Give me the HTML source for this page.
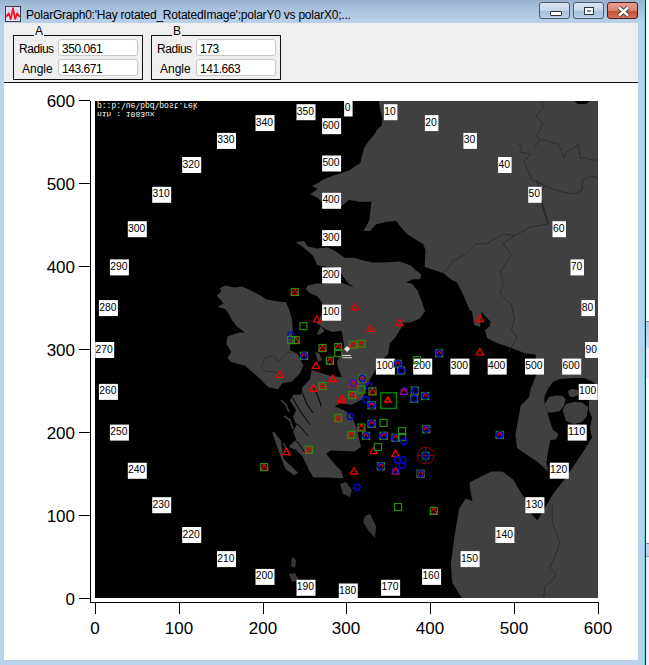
<!DOCTYPE html>
<html><head><meta charset="utf-8">
<style>
html,body{margin:0;padding:0;}
body{width:649px;height:665px;overflow:hidden;position:relative;background:#fff;font-family:"Liberation Sans",sans-serif;}
.a{position:absolute;}
#outside{left:645px;top:0;width:4px;height:665px;background:linear-gradient(#fff 0,#fff 321px,#8a8a8a 321px,#8a8a8a 322px,#c3ceda 322px,#d6dee8 348px,#eeeeee 348px,#eeeeee 378px,#fff 378px,#fff 543px,#8a8a8a 543px,#8a8a8a 544px,#c8d4e0 544px,#c8d4e0 556px,#a0a0a0 556px,#a0a0a0 557px,#eeeeee 557px);}
#frame{left:0;top:0;width:645px;height:665px;background:#b9d1ea;}
#title{left:0;top:0;width:645px;height:23px;background:linear-gradient(#98b2cf,#a6bfdb 8px,#b9d1ea 23px);}
#edge1{left:644px;top:0;width:1px;height:665px;background:#5ad8f8;}
#edge2{left:645px;top:0;width:1px;height:665px;background:#111;}
#content{left:4px;top:23px;width:634px;height:637px;background:#fff;}
#panel{left:4px;top:23px;width:634px;height:59px;background:#efefef;}
#pline{left:4px;top:82px;width:634px;height:1px;background:#111;}
.ttl{left:26px;top:7.5px;font-size:12px;letter-spacing:-0.22px;color:#000;white-space:nowrap;}
.gb{border:1px solid #111;width:128px;height:43px;}
.gl{font-size:12px;background:#efefef;padding:0 1px;color:#000;}
.lab{font-size:12px;letter-spacing:-0.45px;color:#000;}
.tb{background:#fff;border:1px solid #c8c8c8;border-radius:3px;height:15px;width:75px;font-size:12px;letter-spacing:-0.45px;line-height:19px;padding-left:3px;box-sizing:content-box;}
.btn{top:2px;height:17px;border:1px solid #4c5a6e;border-radius:3px;background:linear-gradient(#d9e6f4,#c3d5ea 50%,#a7bfdb 51%,#b9cfe8);box-sizing:border-box;}
.ax{font-size:17px;color:#000;white-space:nowrap;}
.pl{font-size:11px;background:#fff;color:#000;height:16px;line-height:16px;padding:0 2px;white-space:nowrap;transform:translate(-50%,-50%);}
</style></head><body>
<div class="a" id="outside"></div>
<div class="a" id="frame"></div>
<div class="a" id="title"></div>
<div class="a" id="edge1"></div>
<div class="a" id="edge2"></div>
<!-- icon -->
<svg class="a" style="left:5px;top:6px" width="16" height="16" viewBox="0 0 16 16">
<rect x="0.5" y="0.5" width="15" height="15" fill="#dfe2fa" stroke="#3a3f4a"/>
<path d="M1 4.5H15 M1 8.5H15 M1 12.5H15 M4.5 1V15 M8.5 1V15 M12.5 1V15" stroke="#c4c8f4" stroke-width="1" stroke-dasharray="1,1"/>
<path d="M1.2,11 L3.6,7.2 L5.8,13 L8,2.2 L10.2,13 L12.2,7.2 L14.7,11" fill="none" stroke="#f41020" stroke-width="1.7" stroke-linejoin="round"/>
</svg>
<div class="a ttl">PolarGraph0:'Hay rotated_RotatedImage';polarY0 vs polarX0;...</div>
<!-- buttons -->
<div class="a btn" style="left:539px;width:31px;"><div class="a" style="left:10px;top:8px;width:10px;height:3px;background:#fff;border:1px solid #333;border-radius:1px"></div></div>
<div class="a btn" style="left:573px;width:31px;"><div class="a" style="left:10px;top:4px;width:8px;height:6px;border:1px solid #333;background:#fff"><div class="a" style="left:2px;top:2px;width:4px;height:2px;border:0;background:#6b86a8"></div></div></div>
<div class="a btn" style="left:607px;width:31px;border-color:#4a1a1a;background:linear-gradient(#e8a090,#d98270 50%,#c14a30 51%,#d57058)"><svg class="a" style="left:9px;top:3px" width="13" height="11" viewBox="0 0 13 11"><path d="M2 1.5 L11 9.5 M11 1.5 L2 9.5" stroke="#333" stroke-width="4"/><path d="M2 1.5 L11 9.5 M11 1.5 L2 9.5" stroke="#fff" stroke-width="2.4"/></svg></div>

<div class="a" id="content"></div>
<div class="a" id="panel"></div>
<div class="a" id="pline"></div>

<!-- group A -->
<div class="a gb" style="left:13px;top:35px;"></div>
<div class="a gl" style="left:34px;top:24px;">A</div>
<div class="a lab" style="left:19px;top:42px;">Radius</div>
<div class="a lab" style="left:22px;top:62px;letter-spacing:0">Angle</div>
<div class="a tb" style="left:58px;top:39px;">350.061</div>
<div class="a tb" style="left:58px;top:59px;">143.671</div>
<!-- group B -->
<div class="a gb" style="left:151px;top:35px;"></div>
<div class="a gl" style="left:172px;top:24px;">B</div>
<div class="a lab" style="left:157px;top:42px;">Radius</div>
<div class="a lab" style="left:160px;top:62px;letter-spacing:0">Angle</div>
<div class="a tb" style="left:196px;top:39px;">173</div>
<div class="a tb" style="left:196px;top:59px;">141.663</div>

<!-- axes -->
<div class="a" style="left:90px;top:101px;width:1px;height:502px;background:#000"></div>
<div class="a" style="left:90px;top:602px;width:509px;height:1px;background:#000"></div>

<svg class="a" id="plot" style="left:95px;top:101px" width="503" height="497" viewBox="95 101 503 497">
<rect x="95" y="101" width="503" height="497" fill="#000"/>
<polygon points="378.8,101 380.6,111 382.5,118.5 381.5,125.9 376.9,129.6 375.1,133.3 367.7,142.5 364,148 362.1,155.5 360.3,162.9 354.7,166.6 349.2,170.3 341.8,173 332.5,175.8 323.3,179.5 317.7,183.2 312.2,186 317.7,188.8 310.3,194.3 317.7,198 323.3,203.5 340,207.2 349.2,199.8 358.4,201.7 371.4,201.7 369.5,220 363.6,230.7 370,231 376,224.5 386,221.8 396,221 401.6,228 407.7,234.6 415.4,239.2 423.1,243.9 425.5,250 424.7,267 433.9,270 443.2,273.1 450.9,279.3 457,282.4 460,288.6 464.3,297.3 469.7,310.2 472.2,311.3 473.1,317.7 474,325.1 480,327 481,316 482,312 486,317 490.5,321.5 490,326 485,330 487,338 498,343.6 505.3,345.8 513.9,349 524.7,353.3 535.5,354.4 537,365 536,376 530.7,388.8 529,397.3 520.5,405.8 518.8,416 515.4,434.6 517.1,448 527.3,455 537.5,461.7 548.3,471.4 546.5,462 548,452 550.2,440 556,439.5 558.5,434 553,430 550.2,422 547.4,412.4 544.5,404 544.5,396 548,389 553,382 560,379 568,378.5 576,378 584,378 591,381 598,385 598,101 590,101 586,104 578,104 574,101" fill="#404040"/>
<polygon points="461.7,598 452.2,582.4 450.8,563.5 454.9,533.7 459,509.3 465.7,498.5 472.5,501.2 469.8,487.7 469.8,482.3 480.6,476.8 491.4,471.4 502.3,471.4 513.1,479.6 521.2,493.1 526.6,501.2 532,514.7 537.5,520.2 545.6,506.6 553.7,493.1 564.5,479.6 575.4,463.3 586.2,447.1 594.3,433.5 596,420 595,400 598,395 598,598" fill="#404040"/>
<polygon points="225.4,285.6 234.2,287.6 242,286.6 248.9,289.5 256.7,293.5 260.6,295.4 266.4,299.3 276.2,301.3 286,302.2 288.9,309.1 291.9,318.9 292.8,330.6 290.9,340.4 289.9,350.1 297.7,354 301.6,361.9 303.6,365.8 299.7,373.6 291.9,381.4 282.1,383.3 278.2,389.2 268.4,387.3 258.6,377.5 251.8,371.6 245,365.8 231.3,361.9 227.4,357.9 231.3,352.1 226.4,344.3 227.4,336.4 239.1,332.5 244.9,332.5 237.1,326.7 231.3,318.9 229.3,315 225.4,309.1 217.6,307.1 223.5,303.2 216.6,295.4 221.5,291.5 219.5,288.6" fill="#404040"/>
<polygon points="295.7,242 304,241.1 307.7,246.6 317,248.5 328.1,247.6 335.5,251.3 344.7,257.7 354,257.7 363.2,260.5 372.5,262.4 383.5,262.4 400,261.4 410.8,265.4 415.4,270 421.6,274.7 420,279.3 412.4,279.3 406.2,282.4 412.1,283.7 417.7,291.1 421.4,300.3 425,311.4 419.5,318.8 410.3,322.5 402.9,322.5 401,328 395.5,337.3 390,342.9 388.1,354 380.7,361.4 375.1,370.6 369.6,379.9 366.2,388 362.5,399.2 351.4,404.7 340.3,402.9 334.7,406.6 344,410.3 349.5,414 353.2,419.5 356.9,428.8 359,438 361,447 354.3,451.6 330.6,450.5 326.3,453.7 335,464.5 341.4,471 343.5,478.5 330.6,477.5 313.3,477.5 309,470 305.5,462.4 302.4,456.3 296.2,450.1 288.5,447 296.2,439.3 293.1,431.6 296.2,425.5 293.1,416.2 296.2,410 290,400.8 293.1,394.7 300.8,394.7 302.4,387 310.1,379.2 311.6,370 318,372 331,376 342,377 338,368 336.8,361.5 341.7,354.1 344.2,345.5 343,339.3 341.7,330.7 331.9,332 325.7,329.5 317,323.3 323,312 322,302.3 317,296 309.6,292.9 305.9,289.2 307.7,285.5 317,283.6 326.2,283.6 341,282.7 354,287.3 348.4,283.6 342.9,276.2 339.2,268.8 328.1,267 317,265.1 313.3,255.9 302.2,246.6" fill="#404040"/>
<polygon points="274.5,432.2 281,440.8 283.1,458 287.5,462.4 298.2,473.1 294,475.3 285.3,468.8 278.8,451.6 272,432" fill="#404040"/>
<polygon points="544.5,404 549,397 556,395.5 562,395.8 565.5,399 564,406 560,411 552,412.4 547.4,412.4" fill="#404040"/>
<polygon points="568,391 572,388.8 578,390 578,395 573,397.2 569,396" fill="#404040"/>
<polygon points="562.7,410 566,404 574,402 582,402.5 588,407 587,416 582,422 574,424 566,421" fill="#404040"/>
<polygon points="589,401 594,396 598,394 598,440 592,438 590,428 592,418 589,410" fill="#404040"/>
<polygon points="317,334 321,326 324.5,331 320,334.4" fill="#404040"/>
<polygon points="315,352 319,353 322,360 318,361.5" fill="#404040"/>
<polygon points="340,484 346,482 352,490 350,497 343,494" fill="#383838"/>
<polygon points="365,516 370,514 376,526 375,538 368,530 363,522" fill="#383838"/>
<polygon points="292,557 296,560 295,568 291,566" fill="#383838"/>
<polygon points="289,574 295,573 299,580 292,582" fill="#383838"/>
<polyline points="299.8,386.5 306.4,403 313,413" fill="none" stroke="#000" stroke-width="1"/>
<polyline points="291.6,396.4 301.5,413 309.8,424.5" fill="none" stroke="#000" stroke-width="1"/>
<polyline points="289.9,419.6 299.8,426.2 308.1,436.1" fill="none" stroke="#000" stroke-width="1"/>
<polyline points="288.3,436.1 298.2,442.7 304.8,452.6" fill="none" stroke="#000" stroke-width="1"/>
<polyline points="283.3,449.3 296.5,452.6 301.5,462.6" fill="none" stroke="#000" stroke-width="1"/>
<polyline points="313,386.5 318,396.4 321.3,406.4" fill="none" stroke="#000" stroke-width="1"/>
<polyline points="284,416 290,420 293,429" fill="none" stroke="#404040" stroke-width="1.6"/>
<polyline points="283,443 287,449 290,456" fill="none" stroke="#404040" stroke-width="1.6"/>
<polyline points="281,400 286,405 289,412" fill="none" stroke="#404040" stroke-width="1.6"/>
<polyline points="552.3,505 552.2,522.5 559.6,542.2 555.9,554.5 549.7,566.8 555.9,574.2 553.4,579.2 544.8,586.6 543.6,598" fill="none" stroke="#262626" stroke-width="0.8"/>
<polyline points="542.1,100 543.1,108 536.1,116 543.1,124 536.1,136 540.1,139 534.1,148" fill="none" stroke="#262626" stroke-width="0.8"/>
<polyline points="540.1,139 550.2,142 558.2,144 564.2,158 566.2,152 574.2,148 578.2,144 580.2,158 586.2,158 592.2,160 598,160" fill="none" stroke="#262626" stroke-width="0.8"/>
<polyline points="518.1,144 522.1,146 520.1,152 530.1,154 524.1,162 532.1,180 538.1,182 550.2,188 562.2,192 574.2,194 582.2,190 582.2,180 592.2,176 598,178" fill="none" stroke="#262626" stroke-width="0.8"/>
<polyline points="538.1,182 542.1,206 548.2,224 536.5,180" fill="none" stroke="#262626" stroke-width="0.8"/>
<polyline points="548.2,224 530.1,227 525.4,230 514.3,235.5 503.2,234 486.6,243.8 475.5,243.8 464.4,254.9 453.3,260.4 447.7,268.7 442.2,272.9" fill="none" stroke="#262626" stroke-width="0.8"/>
<polyline points="514.3,235.5 503.2,243.8 511.5,254.9 500.4,271.5 503.2,282.6 500.4,293.7 511.5,304.8 514.3,318.7 511.5,329.7 517.1,338 508.7,352" fill="none" stroke="#262626" stroke-width="0.8"/>
<polyline points="548.2,224 539.2,196.6 544.8,185.5" fill="none" stroke="#262626" stroke-width="0.8"/>
<polyline points="261.4,367 265,357.7 274.4,355.8 278,361.4 285.5,354 291,352" fill="none" stroke="#262626" stroke-width="0.8"/>
<polyline points="263.3,370.6 276,372.5 285.5,380" fill="none" stroke="#262626" stroke-width="0.8"/>
<g font-family="Liberation Sans" font-size="11" fill="#000"><rect x="344.1" y="100.5" width="8.5" height="16" fill="#fff"/>
<text x="344.82" y="111.0" textLength="5.75" lengthAdjust="spacingAndGlyphs">0</text>
<rect x="383.9" y="104.2" width="13.5" height="16" fill="#fff"/>
<text x="384.25" y="114.7" textLength="11.50" lengthAdjust="spacingAndGlyphs">10</text>
<rect x="424.9" y="115.1" width="13.5" height="16" fill="#fff"/>
<text x="425.27" y="125.6" textLength="11.50" lengthAdjust="spacingAndGlyphs">20</text>
<rect x="463.4" y="132.9" width="13.5" height="16" fill="#fff"/>
<text x="463.75" y="143.4" textLength="11.50" lengthAdjust="spacingAndGlyphs">30</text>
<rect x="498.1" y="157.0" width="13.5" height="16" fill="#fff"/>
<text x="498.53" y="167.5" textLength="11.50" lengthAdjust="spacingAndGlyphs">40</text>
<rect x="528.2" y="186.8" width="13.5" height="16" fill="#fff"/>
<text x="528.56" y="197.3" textLength="11.50" lengthAdjust="spacingAndGlyphs">50</text>
<rect x="552.5" y="221.2" width="13.5" height="16" fill="#fff"/>
<text x="552.91" y="231.7" textLength="11.50" lengthAdjust="spacingAndGlyphs">60</text>
<rect x="570.5" y="259.4" width="13.5" height="16" fill="#fff"/>
<text x="570.86" y="269.9" textLength="11.50" lengthAdjust="spacingAndGlyphs">70</text>
<rect x="581.4" y="300.1" width="13.5" height="16" fill="#fff"/>
<text x="581.85" y="310.6" textLength="11.50" lengthAdjust="spacingAndGlyphs">80</text>
<rect x="585.1" y="342.0" width="13.5" height="16" fill="#fff"/>
<text x="585.55" y="352.5" textLength="11.50" lengthAdjust="spacingAndGlyphs">90</text>
<rect x="578.7" y="383.9" width="19" height="16" fill="#fff"/>
<text x="578.97" y="394.4" textLength="17.25" lengthAdjust="spacingAndGlyphs">100</text>
<rect x="567.7" y="424.6" width="19" height="16" fill="#fff"/>
<text x="567.98" y="435.1" textLength="17.25" lengthAdjust="spacingAndGlyphs">110</text>
<rect x="549.8" y="462.7" width="19" height="16" fill="#fff"/>
<text x="550.04" y="473.2" textLength="17.25" lengthAdjust="spacingAndGlyphs">120</text>
<rect x="525.4" y="497.2" width="19" height="16" fill="#fff"/>
<text x="525.68" y="507.7" textLength="17.25" lengthAdjust="spacingAndGlyphs">130</text>
<rect x="495.4" y="527.0" width="19" height="16" fill="#fff"/>
<text x="495.66" y="537.5" textLength="17.25" lengthAdjust="spacingAndGlyphs">140</text>
<rect x="460.6" y="551.1" width="19" height="16" fill="#fff"/>
<text x="460.88" y="561.6" textLength="17.25" lengthAdjust="spacingAndGlyphs">150</text>
<rect x="422.1" y="568.9" width="19" height="16" fill="#fff"/>
<text x="422.39" y="579.4" textLength="17.25" lengthAdjust="spacingAndGlyphs">160</text>
<rect x="381.1" y="579.8" width="19" height="16" fill="#fff"/>
<text x="381.38" y="590.3" textLength="17.25" lengthAdjust="spacingAndGlyphs">170</text>
<rect x="338.8" y="583.5" width="19" height="16" fill="#fff"/>
<text x="339.08" y="594.0" textLength="17.25" lengthAdjust="spacingAndGlyphs">180</text>
<rect x="296.5" y="579.8" width="19" height="16" fill="#fff"/>
<text x="296.77" y="590.3" textLength="17.25" lengthAdjust="spacingAndGlyphs">190</text>
<rect x="255.5" y="568.9" width="19" height="16" fill="#fff"/>
<text x="255.76" y="579.4" textLength="17.25" lengthAdjust="spacingAndGlyphs">200</text>
<rect x="217.0" y="551.1" width="19" height="16" fill="#fff"/>
<text x="217.28" y="561.6" textLength="17.25" lengthAdjust="spacingAndGlyphs">210</text>
<rect x="182.2" y="527.0" width="19" height="16" fill="#fff"/>
<text x="182.49" y="537.5" textLength="17.25" lengthAdjust="spacingAndGlyphs">220</text>
<rect x="152.2" y="497.2" width="19" height="16" fill="#fff"/>
<text x="152.47" y="507.7" textLength="17.25" lengthAdjust="spacingAndGlyphs">230</text>
<rect x="127.8" y="462.8" width="19" height="16" fill="#fff"/>
<text x="128.11" y="473.3" textLength="17.25" lengthAdjust="spacingAndGlyphs">240</text>
<rect x="109.9" y="424.6" width="19" height="16" fill="#fff"/>
<text x="110.17" y="435.1" textLength="17.25" lengthAdjust="spacingAndGlyphs">250</text>
<rect x="98.9" y="383.9" width="19" height="16" fill="#fff"/>
<text x="99.18" y="394.4" textLength="17.25" lengthAdjust="spacingAndGlyphs">260</text>
<rect x="95.2" y="342.0" width="19" height="16" fill="#fff"/>
<text x="95.48" y="352.5" textLength="17.25" lengthAdjust="spacingAndGlyphs">270</text>
<rect x="98.9" y="300.1" width="19" height="16" fill="#fff"/>
<text x="99.18" y="310.6" textLength="17.25" lengthAdjust="spacingAndGlyphs">280</text>
<rect x="109.9" y="259.4" width="19" height="16" fill="#fff"/>
<text x="110.17" y="269.9" textLength="17.25" lengthAdjust="spacingAndGlyphs">290</text>
<rect x="127.8" y="221.2" width="19" height="16" fill="#fff"/>
<text x="128.11" y="231.7" textLength="17.25" lengthAdjust="spacingAndGlyphs">300</text>
<rect x="152.2" y="186.8" width="19" height="16" fill="#fff"/>
<text x="152.47" y="197.3" textLength="17.25" lengthAdjust="spacingAndGlyphs">310</text>
<rect x="182.2" y="157.0" width="19" height="16" fill="#fff"/>
<text x="182.49" y="167.5" textLength="17.25" lengthAdjust="spacingAndGlyphs">320</text>
<rect x="217.0" y="132.9" width="19" height="16" fill="#fff"/>
<text x="217.27" y="143.4" textLength="17.25" lengthAdjust="spacingAndGlyphs">330</text>
<rect x="255.5" y="115.1" width="19" height="16" fill="#fff"/>
<text x="255.76" y="125.6" textLength="17.25" lengthAdjust="spacingAndGlyphs">340</text>
<rect x="296.5" y="104.2" width="19" height="16" fill="#fff"/>
<text x="296.77" y="114.7" textLength="17.25" lengthAdjust="spacingAndGlyphs">350</text>
<rect x="322.1" y="304.7" width="19" height="16" fill="#fff"/>
<text x="322.38" y="315.2" textLength="17.25" lengthAdjust="spacingAndGlyphs">100</text>
<rect x="375.9" y="358.6" width="19" height="16" fill="#fff"/>
<text x="376.22" y="369.1" textLength="17.25" lengthAdjust="spacingAndGlyphs">100</text>
<rect x="322.1" y="267.4" width="19" height="16" fill="#fff"/>
<text x="322.38" y="277.9" textLength="17.25" lengthAdjust="spacingAndGlyphs">200</text>
<rect x="413.2" y="358.6" width="19" height="16" fill="#fff"/>
<text x="413.47" y="369.1" textLength="17.25" lengthAdjust="spacingAndGlyphs">200</text>
<rect x="322.1" y="230.1" width="19" height="16" fill="#fff"/>
<text x="322.38" y="240.6" textLength="17.25" lengthAdjust="spacingAndGlyphs">300</text>
<rect x="450.4" y="358.6" width="19" height="16" fill="#fff"/>
<text x="450.72" y="369.1" textLength="17.25" lengthAdjust="spacingAndGlyphs">300</text>
<rect x="322.1" y="192.8" width="19" height="16" fill="#fff"/>
<text x="322.38" y="203.3" textLength="17.25" lengthAdjust="spacingAndGlyphs">400</text>
<rect x="487.7" y="358.6" width="19" height="16" fill="#fff"/>
<text x="487.97" y="369.1" textLength="17.25" lengthAdjust="spacingAndGlyphs">400</text>
<rect x="322.1" y="155.5" width="19" height="16" fill="#fff"/>
<text x="322.38" y="166.0" textLength="17.25" lengthAdjust="spacingAndGlyphs">500</text>
<rect x="525.0" y="358.6" width="19" height="16" fill="#fff"/>
<text x="525.23" y="369.1" textLength="17.25" lengthAdjust="spacingAndGlyphs">500</text>
<rect x="322.1" y="118.2" width="19" height="16" fill="#fff"/>
<text x="322.38" y="128.7" textLength="17.25" lengthAdjust="spacingAndGlyphs">600</text>
<rect x="562.2" y="358.6" width="19" height="16" fill="#fff"/>
<text x="562.48" y="369.1" textLength="17.25" lengthAdjust="spacingAndGlyphs">600</text></g>
<path d="M362.4,375.2 L366.1,381.5 L358.7,381.5Z" fill="none" stroke="#f00000" stroke-width="1.35" stroke-linejoin="round"/>
<rect x="358.9" y="375.0" width="7" height="7" fill="none" stroke="#2a8a10" stroke-width="1.2"/>
<circle cx="362.4" cy="378.5" r="3.1" fill="none" stroke="#0808c8" stroke-width="1.4"/>
<path d="M353.1,379.8 L356.8,386.1 L349.4,386.1Z" fill="none" stroke="#f00000" stroke-width="1.35" stroke-linejoin="round"/>
<circle cx="353.1" cy="383.1" r="3.1" fill="none" stroke="#4010c0" stroke-width="1.4"/>
<circle cx="368.8" cy="385.9" r="3.1" fill="none" stroke="#0808c8" stroke-width="1.4"/>
<path d="M372.5,388.1 L376.2,394.4 L368.8,394.4Z" fill="none" stroke="#f00000" stroke-width="1.35" stroke-linejoin="round"/>
<rect x="369.0" y="387.9" width="7" height="7" fill="none" stroke="#2a8a10" stroke-width="1.2"/>
<rect x="357.9" y="386.1" width="7" height="7" fill="none" stroke="#2a8a10" stroke-width="1.2"/>
<path d="M352.2,391.8 L355.9,398.1 L348.5,398.1Z" fill="none" stroke="#f00000" stroke-width="1.35" stroke-linejoin="round"/>
<rect x="348.7" y="391.6" width="7" height="7" fill="none" stroke="#2a8a10" stroke-width="1.2"/>
<path d="M342.0,396.5 L345.7,402.8 L338.3,402.8Z" fill="none" stroke="#f00000" stroke-width="1.35" stroke-linejoin="round"/>
<circle cx="366.0" cy="399.8" r="3.1" fill="none" stroke="#0808c8" stroke-width="1.4"/>
<circle cx="366.0" cy="399.8" r="3.1" fill="none" stroke="#0808c8" stroke-width="1.4"/>
<path d="M371.6,402.0 L375.3,408.3 L367.9,408.3Z" fill="none" stroke="#f00000" stroke-width="1.35" stroke-linejoin="round"/>
<rect x="368.1" y="401.8" width="7" height="7" fill="none" stroke="#2a8a10" stroke-width="1.2"/>
<circle cx="371.6" cy="405.3" r="3.1" fill="none" stroke="#0808c8" stroke-width="1.4"/>
<path d="M404.0,388.1 L407.7,394.4 L400.3,394.4Z" fill="none" stroke="#f00000" stroke-width="1.35" stroke-linejoin="round"/>
<circle cx="404.0" cy="391.4" r="3.1" fill="none" stroke="#4010c0" stroke-width="1.4"/>
<rect x="411.5" y="387.0" width="7" height="7" fill="none" stroke="#2a8a10" stroke-width="1.2"/>
<circle cx="415.0" cy="390.5" r="3.1" fill="none" stroke="#0808c8" stroke-width="1.4"/>
<rect x="410.5" y="395.3" width="7" height="7" fill="none" stroke="#2a8a10" stroke-width="1.2"/>
<circle cx="414.0" cy="398.8" r="3.1" fill="none" stroke="#0808c8" stroke-width="1.4"/>
<path d="M425.2,392.7 L428.9,399.0 L421.5,399.0Z" fill="none" stroke="#f00000" stroke-width="1.35" stroke-linejoin="round"/>
<rect x="421.7" y="392.5" width="7" height="7" fill="none" stroke="#2a8a10" stroke-width="1.2"/>
<circle cx="425.2" cy="396.0" r="3.1" fill="none" stroke="#0808c8" stroke-width="1.4"/>
<path d="M332.8,375.2 L336.5,381.5 L329.1,381.5Z" fill="none" stroke="#f00000" stroke-width="1.35" stroke-linejoin="round"/>
<path d="M338.3,414.9 L342.0,421.2 L334.6,421.2Z" fill="none" stroke="#f00000" stroke-width="1.35" stroke-linejoin="round"/>
<rect x="334.8" y="414.7" width="7" height="7" fill="none" stroke="#2a8a10" stroke-width="1.2"/>
<circle cx="350.3" cy="416.4" r="3.1" fill="none" stroke="#0808c8" stroke-width="1.4"/>
<path d="M361.4,424.2 L365.1,430.5 L357.7,430.5Z" fill="none" stroke="#f00000" stroke-width="1.35" stroke-linejoin="round"/>
<rect x="357.9" y="424.0" width="7" height="7" fill="none" stroke="#2a8a10" stroke-width="1.2"/>
<path d="M371.6,420.5 L375.3,426.8 L367.9,426.8Z" fill="none" stroke="#f00000" stroke-width="1.35" stroke-linejoin="round"/>
<rect x="368.1" y="420.3" width="7" height="7" fill="none" stroke="#2a8a10" stroke-width="1.2"/>
<circle cx="371.6" cy="423.8" r="3.1" fill="none" stroke="#0808c8" stroke-width="1.4"/>
<rect x="380.1" y="419.4" width="7" height="7" fill="none" stroke="#2a8a10" stroke-width="1.2"/>
<path d="M351.3,431.6 L355.0,437.9 L347.6,437.9Z" fill="none" stroke="#f00000" stroke-width="1.35" stroke-linejoin="round"/>
<rect x="347.8" y="431.4" width="7" height="7" fill="none" stroke="#2a8a10" stroke-width="1.2"/>
<path d="M366.0,432.5 L369.7,438.8 L362.3,438.8Z" fill="none" stroke="#f00000" stroke-width="1.35" stroke-linejoin="round"/>
<rect x="362.5" y="432.3" width="7" height="7" fill="none" stroke="#2a8a10" stroke-width="1.2"/>
<circle cx="366.0" cy="435.8" r="3.1" fill="none" stroke="#0808c8" stroke-width="1.4"/>
<path d="M383.6,432.5 L387.3,438.8 L379.9,438.8Z" fill="none" stroke="#f00000" stroke-width="1.35" stroke-linejoin="round"/>
<rect x="380.1" y="432.3" width="7" height="7" fill="none" stroke="#2a8a10" stroke-width="1.2"/>
<circle cx="383.6" cy="435.8" r="3.1" fill="none" stroke="#0808c8" stroke-width="1.4"/>
<path d="M395.6,434.4 L399.3,440.7 L391.9,440.7Z" fill="none" stroke="#f00000" stroke-width="1.35" stroke-linejoin="round"/>
<rect x="392.1" y="434.2" width="7" height="7" fill="none" stroke="#2a8a10" stroke-width="1.2"/>
<circle cx="395.6" cy="437.7" r="3.1" fill="none" stroke="#0808c8" stroke-width="1.4"/>
<rect x="398.6" y="427.5" width="7" height="7" fill="none" stroke="#2a8a10" stroke-width="1.2"/>
<rect x="398.6" y="433.5" width="7" height="7" fill="none" stroke="#2a8a10" stroke-width="1.2"/>
<circle cx="404.0" cy="441.4" r="3.1" fill="none" stroke="#0808c8" stroke-width="1.4"/>
<path d="M426.2,426.0 L429.9,432.3 L422.5,432.3Z" fill="none" stroke="#f00000" stroke-width="1.35" stroke-linejoin="round"/>
<rect x="422.7" y="425.8" width="7" height="7" fill="none" stroke="#2a8a10" stroke-width="1.2"/>
<circle cx="426.2" cy="429.3" r="3.1" fill="none" stroke="#0808c8" stroke-width="1.4"/>
<path d="M373.5,447.3 L377.2,453.6 L369.8,453.6Z" fill="none" stroke="#f00000" stroke-width="1.35" stroke-linejoin="round"/>
<rect x="374.5" y="443.5" width="7" height="7" fill="none" stroke="#2a8a10" stroke-width="1.2"/>
<path d="M395.6,450.1 L399.3,456.4 L391.9,456.4Z" fill="none" stroke="#f00000" stroke-width="1.35" stroke-linejoin="round"/>
<circle cx="397.5" cy="459.9" r="3.1" fill="none" stroke="#0808c8" stroke-width="1.4"/>
<circle cx="397.5" cy="459.9" r="3.1" fill="none" stroke="#0808c8" stroke-width="1.4"/>
<circle cx="403.0" cy="459.9" r="3.1" fill="none" stroke="#0808c8" stroke-width="1.4"/>
<circle cx="402.1" cy="465.4" r="3.1" fill="none" stroke="#0808c8" stroke-width="1.4"/>
<path d="M380.9,463.0 L384.6,469.3 L377.2,469.3Z" fill="none" stroke="#f00000" stroke-width="1.35" stroke-linejoin="round"/>
<rect x="377.4" y="462.8" width="7" height="7" fill="none" stroke="#2a8a10" stroke-width="1.2"/>
<circle cx="380.9" cy="466.3" r="3.1" fill="none" stroke="#0808c8" stroke-width="1.4"/>
<path d="M395.6,467.7 L399.3,474.0 L391.9,474.0Z" fill="none" stroke="#f00000" stroke-width="1.35" stroke-linejoin="round"/>
<circle cx="395.6" cy="471.0" r="3.1" fill="none" stroke="#4010c0" stroke-width="1.4"/>
<path d="M354.0,467.7 L357.7,474.0 L350.3,474.0Z" fill="none" stroke="#f00000" stroke-width="1.35" stroke-linejoin="round"/>
<path d="M420.6,470.4 L424.3,476.7 L416.9,476.7Z" fill="none" stroke="#f00000" stroke-width="1.35" stroke-linejoin="round"/>
<rect x="417.1" y="470.2" width="7" height="7" fill="none" stroke="#2a8a10" stroke-width="1.2"/>
<circle cx="420.6" cy="473.7" r="3.1" fill="none" stroke="#0808c8" stroke-width="1.4"/>
<path d="M294.7,288.7 L298.4,295.0 L291.0,295.0Z" fill="none" stroke="#f00000" stroke-width="1.35" stroke-linejoin="round"/>
<rect x="291.2" y="288.5" width="7" height="7" fill="none" stroke="#2a8a10" stroke-width="1.2"/>
<path d="M316.9,315.5 L320.6,321.8 L313.2,321.8Z" fill="none" stroke="#f00000" stroke-width="1.35" stroke-linejoin="round"/>
<rect x="299.9" y="322.7" width="7" height="7" fill="none" stroke="#2a8a10" stroke-width="1.2"/>
<circle cx="291.0" cy="335.0" r="3.1" fill="none" stroke="#0808c8" stroke-width="1.4"/>
<path d="M295.6,336.8 L299.3,343.1 L291.9,343.1Z" fill="none" stroke="#f00000" stroke-width="1.35" stroke-linejoin="round"/>
<rect x="292.1" y="336.6" width="7" height="7" fill="none" stroke="#2a8a10" stroke-width="1.2"/>
<rect x="287.5" y="336.5" width="7" height="7" fill="none" stroke="#2a8a10" stroke-width="1.2"/>
<path d="M304.0,352.5 L307.7,358.8 L300.3,358.8Z" fill="none" stroke="#f00000" stroke-width="1.35" stroke-linejoin="round"/>
<rect x="300.5" y="352.3" width="7" height="7" fill="none" stroke="#2a8a10" stroke-width="1.2"/>
<circle cx="304.0" cy="355.8" r="3.1" fill="none" stroke="#0808c8" stroke-width="1.4"/>
<path d="M322.5,344.7 L326.2,351.0 L318.8,351.0Z" fill="none" stroke="#f00000" stroke-width="1.35" stroke-linejoin="round"/>
<rect x="319.0" y="344.5" width="7" height="7" fill="none" stroke="#2a8a10" stroke-width="1.2"/>
<path d="M338.2,343.7 L341.9,350.0 L334.5,350.0Z" fill="none" stroke="#f00000" stroke-width="1.35" stroke-linejoin="round"/>
<rect x="334.7" y="343.5" width="7" height="7" fill="none" stroke="#2a8a10" stroke-width="1.2"/>
<rect x="334.7" y="349.5" width="7" height="7" fill="none" stroke="#2a8a10" stroke-width="1.2"/>
<path d="M329.9,357.5 L333.6,363.8 L326.2,363.8Z" fill="none" stroke="#f00000" stroke-width="1.35" stroke-linejoin="round"/>
<rect x="326.4" y="357.3" width="7" height="7" fill="none" stroke="#2a8a10" stroke-width="1.2"/>
<path d="M316.0,362.1 L319.7,368.4 L312.3,368.4Z" fill="none" stroke="#f00000" stroke-width="1.35" stroke-linejoin="round"/>
<path d="M280.0,371.0 L283.7,377.3 L276.3,377.3Z" fill="none" stroke="#f00000" stroke-width="1.35" stroke-linejoin="round"/>
<path d="M332.6,375.1 L336.3,381.4 L328.9,381.4Z" fill="none" stroke="#f00000" stroke-width="1.35" stroke-linejoin="round"/>
<path d="M322.5,382.7 L326.2,389.0 L318.8,389.0Z" fill="none" stroke="#f00000" stroke-width="1.35" stroke-linejoin="round"/>
<rect x="319.0" y="382.5" width="7" height="7" fill="none" stroke="#2a8a10" stroke-width="1.2"/>
<path d="M313.2,384.9 L316.9,391.2 L309.5,391.2Z" fill="none" stroke="#f00000" stroke-width="1.35" stroke-linejoin="round"/>
<path d="M341.9,395.0 L345.6,401.3 L338.2,401.3Z" fill="none" stroke="#f00000" stroke-width="1.35" stroke-linejoin="round"/>
<path d="M354.8,303.5 L358.5,309.8 L351.1,309.8Z" fill="none" stroke="#f00000" stroke-width="1.35" stroke-linejoin="round"/>
<path d="M370.5,325.1 L374.2,331.4 L366.8,331.4Z" fill="none" stroke="#f00000" stroke-width="1.35" stroke-linejoin="round"/>
<path d="M399.5,319.2 L403.2,325.5 L395.8,325.5Z" fill="none" stroke="#f00000" stroke-width="1.35" stroke-linejoin="round"/>
<path d="M353.0,341.4 L356.7,347.7 L349.3,347.7Z" fill="none" stroke="#f00000" stroke-width="1.35" stroke-linejoin="round"/>
<rect x="349.5" y="341.2" width="7" height="7" fill="none" stroke="#2a8a10" stroke-width="1.2"/>
<path d="M361.3,340.5 L365.0,346.8 L357.6,346.8Z" fill="none" stroke="#f00000" stroke-width="1.35" stroke-linejoin="round"/>
<rect x="357.8" y="340.3" width="7" height="7" fill="none" stroke="#2a8a10" stroke-width="1.2"/>
<path d="M479.9,315.2 L483.6,321.5 L476.2,321.5Z" fill="none" stroke="#f00000" stroke-width="1.35" stroke-linejoin="round"/>
<path d="M479.9,348.5 L483.6,354.8 L476.2,354.8Z" fill="none" stroke="#f00000" stroke-width="1.35" stroke-linejoin="round"/>
<path d="M439.2,350.0 L442.9,356.3 L435.5,356.3Z" fill="none" stroke="#f00000" stroke-width="1.35" stroke-linejoin="round"/>
<rect x="435.7" y="349.8" width="7" height="7" fill="none" stroke="#2a8a10" stroke-width="1.2"/>
<circle cx="439.2" cy="353.3" r="3.1" fill="none" stroke="#0808c8" stroke-width="1.4"/>
<path d="M397.6,360.5 L401.3,366.8 L393.9,366.8Z" fill="none" stroke="#f00000" stroke-width="1.35" stroke-linejoin="round"/>
<rect x="394.1" y="360.3" width="7" height="7" fill="none" stroke="#2a8a10" stroke-width="1.2"/>
<circle cx="397.6" cy="363.8" r="3.1" fill="none" stroke="#0808c8" stroke-width="1.4"/>
<rect x="397.8" y="367.1" width="7" height="7" fill="none" stroke="#2a8a10" stroke-width="1.2"/>
<circle cx="401.3" cy="370.6" r="3.1" fill="none" stroke="#0808c8" stroke-width="1.4"/>
<rect x="413.5" y="356.6" width="7" height="7" fill="none" stroke="#2a8a10" stroke-width="1.2"/>
<path d="M286.4,448.3 L290.1,454.6 L282.7,454.6Z" fill="none" stroke="#f00000" stroke-width="1.35" stroke-linejoin="round"/>
<path d="M309.0,446.5 L312.7,452.8 L305.3,452.8Z" fill="none" stroke="#f00000" stroke-width="1.35" stroke-linejoin="round"/>
<rect x="305.5" y="446.3" width="7" height="7" fill="none" stroke="#2a8a10" stroke-width="1.2"/>
<path d="M264.2,463.8 L267.9,470.1 L260.5,470.1Z" fill="none" stroke="#f00000" stroke-width="1.35" stroke-linejoin="round"/>
<rect x="260.7" y="463.6" width="7" height="7" fill="none" stroke="#2a8a10" stroke-width="1.2"/>
<circle cx="357.1" cy="487.2" r="3.1" fill="none" stroke="#0808c8" stroke-width="1.4"/>
<rect x="394.6" y="503.5" width="7" height="7" fill="none" stroke="#2a8a10" stroke-width="1.2"/>
<path d="M433.8,507.6 L437.5,513.9 L430.1,513.9Z" fill="none" stroke="#f00000" stroke-width="1.35" stroke-linejoin="round"/>
<rect x="430.3" y="507.4" width="7" height="7" fill="none" stroke="#2a8a10" stroke-width="1.2"/>
<path d="M499.7,431.6 L503.4,437.9 L496.0,437.9Z" fill="none" stroke="#f00000" stroke-width="1.35" stroke-linejoin="round"/>
<rect x="496.2" y="431.4" width="7" height="7" fill="none" stroke="#2a8a10" stroke-width="1.2"/>
<circle cx="499.7" cy="434.9" r="3.1" fill="none" stroke="#0808c8" stroke-width="1.4"/>
<rect x="380.8" y="392.8" width="15.6" height="15.6" fill="none" stroke="#008a00" stroke-width="1.3"/>
<path d="M381.5,393.5 L395.5,407.5 M395.5,393.5 L381.5,407.5" stroke="#007a00" stroke-width="0.8" stroke-dasharray="1.2,0.8"/>
<path d="M387.9,397 L391,402 L384.8,402Z" fill="none" stroke="#f00000" stroke-width="1.6" stroke-linejoin="round"/>
<circle cx="425.6" cy="455.6" r="8.3" fill="none" stroke="#9a0000" stroke-width="1"/>
<path d="M417.3,455.6 H433.9 M425.6,447.3 V463.9" stroke="#9a0000" stroke-width="1"/>
<rect x="422.3" y="452.3" width="6.6" height="6.6" fill="none" stroke="#2a8a10" stroke-width="1.1"/>
<circle cx="425.6" cy="455.6" r="3" fill="none" stroke="#0808c8" stroke-width="1.4"/>
<path d="M347.1,345.9 L350.1,348.9 L347.1,351.9 L344.1,348.9Z" fill="#e4e4e4"/>
<path d="M342.3,355.5 H351 M342.3,357.7 H352" stroke="#dcdcdc" stroke-width="1"/>
<g transform="translate(97,102.5) scale(1,-1)"><text x="0" y="0" font-family="Liberation Mono" font-size="8" fill="#fff" transform="scale(1,1.05)">p::b:\ue\bpd\post.rek</text></g>
<g transform="translate(97,111.5) scale(1,-1)"><text x="0" y="0" font-family="Liberation Mono" font-size="8" fill="#fff">nih : 1083ux</text></g>
</svg>
<div class="a" style="left:79px;top:598px;width:11px;height:1px;background:#000"></div>
<div class="a ax" style="right:574px;top:590px;">0</div>
<div class="a" style="left:79px;top:515px;width:11px;height:1px;background:#000"></div>
<div class="a ax" style="right:574px;top:507px;">100</div>
<div class="a" style="left:79px;top:432px;width:11px;height:1px;background:#000"></div>
<div class="a ax" style="right:574px;top:424px;">200</div>
<div class="a" style="left:79px;top:349px;width:11px;height:1px;background:#000"></div>
<div class="a ax" style="right:574px;top:341px;">300</div>
<div class="a" style="left:79px;top:266px;width:11px;height:1px;background:#000"></div>
<div class="a ax" style="right:574px;top:258px;">400</div>
<div class="a" style="left:79px;top:183px;width:11px;height:1px;background:#000"></div>
<div class="a ax" style="right:574px;top:175px;">500</div>
<div class="a" style="left:79px;top:100px;width:11px;height:1px;background:#000"></div>
<div class="a ax" style="right:574px;top:92px;">600</div>
<div class="a" style="left:95px;top:602px;width:1px;height:12px;background:#000"></div>
<div class="a ax" style="left:95px;top:619px;transform:translateX(-50%)">0</div>
<div class="a" style="left:179px;top:602px;width:1px;height:12px;background:#000"></div>
<div class="a ax" style="left:179px;top:619px;transform:translateX(-50%)">100</div>
<div class="a" style="left:263px;top:602px;width:1px;height:12px;background:#000"></div>
<div class="a ax" style="left:263px;top:619px;transform:translateX(-50%)">200</div>
<div class="a" style="left:346px;top:602px;width:1px;height:12px;background:#000"></div>
<div class="a ax" style="left:346px;top:619px;transform:translateX(-50%)">300</div>
<div class="a" style="left:430px;top:602px;width:1px;height:12px;background:#000"></div>
<div class="a ax" style="left:430px;top:619px;transform:translateX(-50%)">400</div>
<div class="a" style="left:514px;top:602px;width:1px;height:12px;background:#000"></div>
<div class="a ax" style="left:514px;top:619px;transform:translateX(-50%)">500</div>
<div class="a" style="left:598px;top:602px;width:1px;height:12px;background:#000"></div>
<div class="a ax" style="left:598px;top:619px;transform:translateX(-50%)">600</div>
</body></html>
